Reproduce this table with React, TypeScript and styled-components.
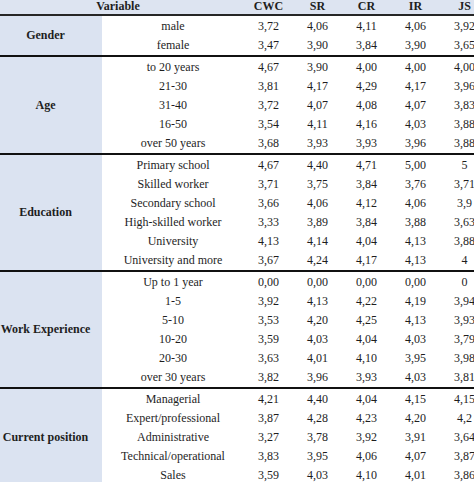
import {Fragment} from "react";
import styled, {createGlobalStyle} from "styled-components";

interface Section {
    label: string
    rows: [string, string[]][]
}

const sections: Section[] = [
    {
        label: "Gender",
        rows: [
            ["male", ["3,72", "4,06", "4,11", "4,06", "3,92"]],
            ["female", ["3,47", "3,90", "3,84", "3,90", "3,65"]],
        ],
    },
    {
        label: "Age",
        rows: [
            ["to 20 years", ["4,67", "3,90", "4,00", "4,00", "4,00"]],
            ["21-30", ["3,81", "4,17", "4,29", "4,17", "3,96"]],
            ["31-40", ["3,72", "4,07", "4,08", "4,07", "3,83"]],
            ["16-50", ["3,54", "4,11", "4,16", "4,03", "3,88"]],
            ["over 50 years", ["3,68", "3,93", "3,93", "3,96", "3,88"]],
        ],
    },
    {
        label: "Education",
        rows: [
            ["Primary school", ["4,67", "4,40", "4,71", "5,00", "5"]],
            ["Skilled worker", ["3,71", "3,75", "3,84", "3,76", "3,71"]],
            ["Secondary school", ["3,66", "4,06", "4,12", "4,06", "3,9"]],
            ["High-skilled worker", ["3,33", "3,89", "3,84", "3,88", "3,63"]],
            ["University", ["4,13", "4,14", "4,04", "4,13", "3,88"]],
            ["University and more", ["3,67", "4,24", "4,17", "4,13", "4"]],
        ],
    },
    {
        label: "Work Experience",
        rows: [
            ["Up to 1 year", ["0,00", "0,00", "0,00", "0,00", "0"]],
            ["1-5", ["3,92", "4,13", "4,22", "4,19", "3,94"]],
            ["5-10", ["3,53", "4,20", "4,25", "4,13", "3,93"]],
            ["10-20", ["3,59", "4,03", "4,04", "4,03", "3,79"]],
            ["20-30", ["3,63", "4,01", "4,10", "3,95", "3,98"]],
            ["over 30 years", ["3,82", "3,96", "3,93", "4,03", "3,81"]],
        ],
    },
    {
        label: "Current position",
        rows: [
            ["Managerial", ["4,21", "4,40", "4,04", "4,15", "4,15"]],
            ["Expert/professional", ["3,87", "4,28", "4,23", "4,20", "4,2"]],
            ["Administrative", ["3,27", "3,78", "3,92", "3,91", "3,64"]],
            ["Technical/operational", ["3,83", "3,95", "4,06", "4,07", "3,87"]],
            ["Sales", ["3,59", "4,03", "4,10", "4,01", "3,86"]],
        ],
    },
];

const columns = ["CWC", "SR", "CR", "IR", "JS"];

const GlobalStyle = createGlobalStyle`
  html, body {
    margin: 0;
    padding: 0;
    background: #ffffff;
    overflow: hidden;
  }

  body {
    font-family: "Liberation Serif", "Times New Roman", serif;
    color: #1e1e1e;
    font-size: 12px;
  }
`;

const Table = styled.div`
  width: 489px;
  display: flex;
  flex-direction: column;
`;

const grid = `
  display: grid;
  grid-template-columns: 102px 142px repeat(5, 49px);
`;

const HeaderRow = styled.div`
  ${grid};
  height: 14px;
  background: #dde4f1;
  border-bottom: 2px solid #262626;
  font-weight: 700;
  line-height: 12px;
`;

const HeaderCell = styled.div<{ $span?: number }>`
  grid-column: span ${p => p.$span ?? 1};
  display: flex;
  justify-content: center;
  align-items: flex-end;
  padding-bottom: 4px;
  padding-right: ${p => (p.$span ? "8px" : "0")};
`;

const Group = styled.div<{ $count: number }>`
  ${grid};
  grid-template-rows: repeat(${p => p.$count}, 19px);
  padding: 1px 0 0;
  border-bottom: 2px solid #111111;
`;

const Label = styled.div`
  grid-column: 1;
  grid-row: 1 / -1;
  background: #dbe3f1;
  margin-top: -1px;
  padding-right: 11px;
  display: flex;
  align-items: center;
  justify-content: center;
  font-weight: 700;
  white-space: nowrap;
`;

const Cell = styled.div`
  display: flex;
  align-items: center;
  justify-content: center;
  white-space: nowrap;
  line-height: 19px;
`;

export default function App() {
    return (
        <>
            <GlobalStyle/>
            <Table>
                <HeaderRow>
                    <HeaderCell $span={2}>Variable</HeaderCell>
                    {columns.map(c => <HeaderCell key={c}>{c}</HeaderCell>)}
                </HeaderRow>
                {sections.map(section => (
                    <Group key={section.label} $count={section.rows.length}>
                        <Label>{section.label}</Label>
                        {section.rows.map(([name, values]) => (
                            <Fragment key={name}>
                                <Cell>{name}</Cell>
                                {values.map((v, i) => <Cell key={i}>{v}</Cell>)}
                            </Fragment>
                        ))}
                    </Group>
                ))}
            </Table>
        </>
    );
}
